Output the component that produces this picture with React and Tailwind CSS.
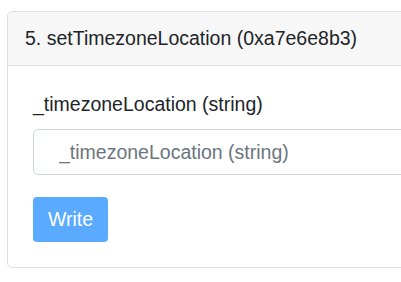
import React from 'react';

export default function App() {
  return (
    <div className="w-[401px] h-[282px] overflow-hidden bg-white pt-[11px] pl-[7px] font-['Liberation_Sans',Arial,sans-serif] text-[#212529]">
      <div className="w-[520px] border border-[#dfdfdf] rounded-[5px] overflow-hidden">
        {/* Header */}
        <div className="bg-[#f7f7f7] border-b border-[#dfdfdf] px-[17px] py-[12px] text-[19.5px] leading-[29px]">
          5. setTimezoneLocation (0xa7e6e8b3)
        </div>

        <div className="pt-[24px] pb-[25px] px-[25px]">
          <label className="block text-[19.5px] leading-[29px] mb-[10px]">_timezoneLocation (string)</label>
          <input
            type="text"
            placeholder="_timezoneLocation (string)"
            className="block w-full h-[46px] border border-[#ced4da] rounded-[5px] pl-[25px] text-[19.5px] placeholder:text-[#6c757d] outline-none"
          />
          <button className="mt-[22px] w-[75px] h-[45px] rounded-[4px] bg-[#5aabff] text-white text-[19.5px] leading-[29px]">
            Write
          </button>
        </div>
      </div>
    </div>
  );
}
